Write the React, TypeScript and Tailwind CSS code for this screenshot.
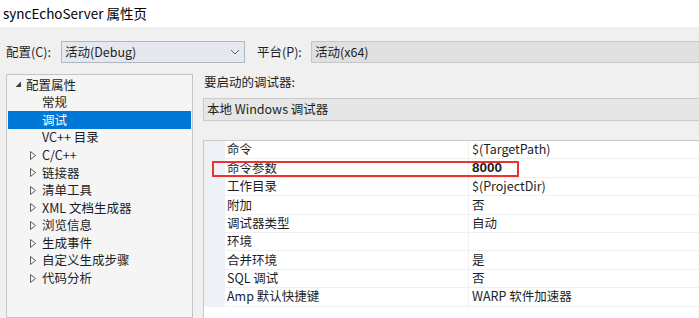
import React from 'react'

const font = { fontFamily: '"Noto Sans CJK SC", "Noto Sans", sans-serif' }

type TreeItem = { label: string; level: 0 | 1; expand?: 'open' | 'closed'; selected?: boolean }

const tree: TreeItem[] = [
  { label: '配置属性', level: 0, expand: 'open' },
  { label: '常规', level: 1 },
  { label: '调试', level: 1, selected: true },
  { label: 'VC++ 目录', level: 1 },
  { label: 'C/C++', level: 1, expand: 'closed' },
  { label: '链接器', level: 1, expand: 'closed' },
  { label: '清单工具', level: 1, expand: 'closed' },
  { label: 'XML 文档生成器', level: 1, expand: 'closed' },
  { label: '浏览信息', level: 1, expand: 'closed' },
  { label: '生成事件', level: 1, expand: 'closed' },
  { label: '自定义生成步骤', level: 1, expand: 'closed' },
  { label: '代码分析', level: 1, expand: 'closed' },
]

const props: { name: string; value: string; bold?: boolean }[] = [
  { name: '命令', value: '$(TargetPath)' },
  { name: '命令参数', value: '8000', bold: true },
  { name: '工作目录', value: '$(ProjectDir)' },
  { name: '附加', value: '否' },
  { name: '调试器类型', value: '自动' },
  { name: '环境', value: '' },
  { name: '合并环境', value: '是' },
  { name: 'SQL 调试', value: '否' },
  { name: 'Amp 默认快捷键', value: 'WARP 软件加速器' },
]

function Chevron() {
  return (
    <svg width="10" height="6" viewBox="0 0 10 6" className="mr-[4px]">
      <path d="M1 1 L5 5 L9 1" fill="none" stroke="#606060" strokeWidth="1" />
    </svg>
  )
}

function TreeRow({ item }: { item: TreeItem }) {
  return (
    <div
      className={`h-[17.6px] flex items-center text-[12.5px] leading-none ${
        item.selected ? 'bg-[#0078d7] text-white' : 'text-[#1e1e1e]'
      }`}
    >
      {item.level === 0 ? (
        <>
          <svg width="7" height="7" viewBox="0 0 7 7" className="ml-[7px] mr-[4px]">
            <path d="M6 0.5 L6 6 L0.5 6 Z" fill="#404040" />
          </svg>
          <span>{item.label}</span>
        </>
      ) : (
        <>
          <div className="w-[14px] ml-[20px] flex items-center">
            {item.expand === 'closed' && (
              <svg width="6" height="9" viewBox="0 0 6 9" className="ml-[2px]">
                <path d="M0.5 0.5 L5.5 4.5 L0.5 8.5 Z" fill="none" stroke="#606060" strokeWidth="1" />
              </svg>
            )}
          </div>
          <span>{item.label}</span>
        </>
      )}
    </div>
  )
}

export default function App() {
  return (
    <div className="w-[699px] h-[318px] overflow-hidden bg-[#f0f0f0] flex flex-col" style={font}>
      {/* title bar */}
      <div className="h-[27px] bg-white flex items-center pl-[3px] text-[13.5px] text-black shrink-0">
        syncEchoServer 属性页
      </div>

      {/* config / platform */}
      <div className="mt-[14px] h-[22px] flex items-center text-[12.5px] text-[#1e1e1e] shrink-0">
        <div className="w-[61px] pl-[6px]">配置(C):</div>
        <div className="w-[184px] h-[22px] bg-[#e5e9ee] border border-[#adb7c3] flex items-center justify-between pl-[3px]">
          <span>活动(Debug)</span>
          <Chevron />
        </div>
        <div className="w-[66px] pl-[12px]">平台(P):</div>
        <div className="flex-1 h-[22px] bg-[#e0e0e0] border-y border-l border-[#c6c6c6] flex items-center pl-[3px]">
          活动(x64)
        </div>
      </div>

      <div className="mt-[11px] flex flex-1 min-h-0">
        {/* tree */}
        <div className="ml-[6px] w-[187px] bg-[#f5f5f5] border border-[#c4c4c4] pt-[1px] px-[1px]">
          {tree.map((t) => (
            <TreeRow key={t.label} item={t} />
          ))}
        </div>

        {/* right side */}
        <div className="ml-[10px] flex-1 flex flex-col">
          <div className="h-[16px] mb-[8px] pl-[1px] flex items-center text-[12.5px] text-[#1e1e1e]">要启动的调试器:</div>
          <div className="h-[23px] bg-[#e6e6e6] border-y border-l border-[#cbcbcb] flex items-center pl-[3px] text-[12.5px] text-[#1e1e1e]">
            本地 Windows 调试器
          </div>
          <div className="mt-[19px] flex-1 bg-white border-t border-l border-[#c8c8c8] flex flex-col">
            {props.map((p, i) => (
              <div key={p.name} className="h-[18.4px] flex text-[12.5px] text-[#1e1e1e] relative">
                <div className="w-[21px] bg-[#eef1f6] shrink-0" />
                <div className="w-[243px] shrink-0 border-b border-[#f0f0f0] flex items-center pl-[2px]">{p.name}</div>
                <div
                  className={`flex-1 border-b border-l border-[#f0f0f0] flex items-center pl-[3px] ${
                    p.bold ? 'font-bold' : ''
                  }`}
                  style={p.bold ? { fontFamily: '"Liberation Sans", "Noto Sans", sans-serif', fontSize: '13.5px' } : undefined}
                >
                  {p.value}
                </div>
                {i === 1 && (
                  <div className="absolute left-[8px] top-[2px] w-[307px] h-[16px] border-2 border-[#e8332f]" />
                )}
              </div>
            ))}
          </div>
        </div>
      </div>
    </div>
  )
}
